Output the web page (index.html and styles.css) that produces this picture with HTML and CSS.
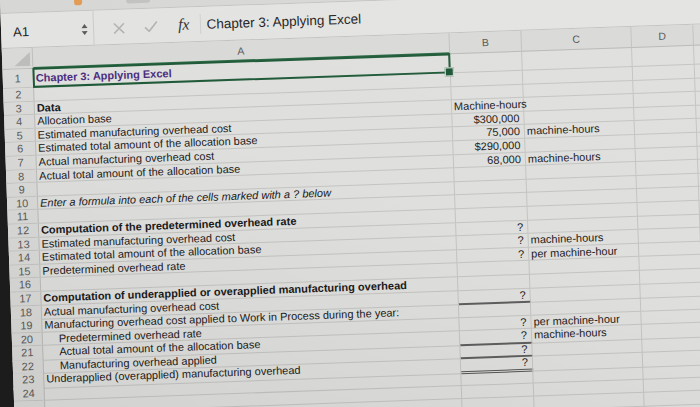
FILE: index.html
```html
<!DOCTYPE html>
<html lang="en">
<head>
<meta charset="utf-8">
<title>Chapter 3: Applying Excel</title>
<link rel="stylesheet" href="styles.css">
</head>
<body>
<div class="screen">
  <div class="toolbar">
    <span class="tb-icon"></span>
    <span class="tb-btn"></span>
  </div>
  <div class="fbar">
    <div class="namebox">
      <span>A1</span>
      <svg class="spin" width="7" height="13" viewBox="0 0 7 13"><path d="M3.5 1 L6.5 5 H0.5 Z M3.5 12 L0.5 8 H6.5 Z" fill="#5a5a5a"/></svg>
    </div>
    <svg class="ico-x" width="12" height="11" viewBox="0 0 12 11"><path d="M1 0.5 L11 10.5 M11 0.5 L1 10.5" stroke="#b3b3b1" stroke-width="1.6" fill="none"/></svg>
    <svg class="ico-ok" width="14" height="12" viewBox="0 0 14 12"><path d="M1 6.5 L5 10.5 L13 1" stroke="#b3b3b1" stroke-width="1.6" fill="none"/></svg>
    <span class="fx">fx</span>
    <span class="fsep"></span>
    <span class="ftext">Chapter 3: Applying Excel</span>
  </div>
  <div class="sheet">
    <div class="hrow">
      <div class="corner"><svg width="16" height="14" viewBox="0 0 16 14"><path d="M16 0 L16 14 L0 14 Z" fill="#bdbdbb"/></svg></div>
      <div class="ch csel">A</div>
      <div class="ch">B</div>
      <div class="ch">C</div>
      <div class="ch">D</div>
      <div class="ch"></div>
    </div>
    <div class="r r1"><div class="rh">1</div><div class="sel">Chapter 3: Applying Excel</div><div></div><div></div><div></div><div></div></div>
    <div class="r"><div class="rh">2</div><div></div><div></div><div></div><div></div><div></div></div>
    <div class="r"><div class="rh">3</div><div class="bold">Data</div><div></div><div></div><div></div><div></div></div>
    <div class="r"><div class="rh">4</div><div>Allocation base</div><div>Machine-hours</div><div></div><div></div><div></div></div>
    <div class="r"><div class="rh">5</div><div>Estimated manufacturing overhead cost</div><div class="num">$300,000</div><div></div><div></div><div></div></div>
    <div class="r"><div class="rh">6</div><div>Estimated total amount of the allocation base</div><div class="num">75,000</div><div>machine-hours</div><div></div><div></div></div>
    <div class="r"><div class="rh">7</div><div>Actual manufacturing overhead cost</div><div class="num">$290,000</div><div></div><div></div><div></div></div>
    <div class="r"><div class="rh">8</div><div>Actual total amount of the allocation base</div><div class="num">68,000</div><div>machine-hours</div><div></div><div></div></div>
    <div class="r"><div class="rh">9</div><div></div><div></div><div></div><div></div><div></div></div>
    <div class="r"><div class="rh">10</div><div class="it">Enter a formula into each of the cells marked with a ? below</div><div></div><div></div><div></div><div></div></div>
    <div class="r"><div class="rh">11</div><div></div><div></div><div></div><div></div><div></div></div>
    <div class="r"><div class="rh">12</div><div class="bold">Computation of the predetermined overhead rate</div><div></div><div></div><div></div><div></div></div>
    <div class="r"><div class="rh">13</div><div>Estimated manufacturing overhead cost</div><div class="num">?</div><div></div><div></div><div></div></div>
    <div class="r"><div class="rh">14</div><div>Estimated total amount of the allocation base</div><div class="num">?</div><div>machine-hours</div><div></div><div></div></div>
    <div class="r"><div class="rh">15</div><div>Predetermined overhead rate</div><div class="num">?</div><div>per machine-hour</div><div></div><div></div></div>
    <div class="r"><div class="rh">16</div><div></div><div></div><div></div><div></div><div></div></div>
    <div class="r"><div class="rh">17</div><div class="bold">Computation of underapplied or overapplied manufacturing overhead</div><div></div><div></div><div></div><div></div></div>
    <div class="r"><div class="rh">18</div><div>Actual manufacturing overhead cost</div><div class="num bb">?</div><div></div><div></div><div></div></div>
    <div class="r"><div class="rh">19</div><div>Manufacturing overhead cost applied to Work in Process during the year:</div><div></div><div></div><div></div><div></div></div>
    <div class="r"><div class="rh">20</div><div class="ind">Predetermined overhead rate</div><div class="num">?</div><div>per machine-hour</div><div></div><div></div></div>
    <div class="r"><div class="rh">21</div><div class="ind">Actual total amount of the allocation base</div><div class="num bb">?</div><div>machine-hours</div><div></div><div></div></div>
    <div class="r"><div class="rh">22</div><div class="ind">Manufacturing overhead applied</div><div class="num bb">?</div><div></div><div></div><div></div></div>
    <div class="r"><div class="rh">23</div><div>Underapplied (overapplied) manufacturing overhead</div><div class="num bd">?</div><div></div><div></div><div></div></div>
    <div class="r"><div class="rh">24</div><div></div><div></div><div></div><div></div><div></div></div>
    <div class="r"><div class="rh"></div><div></div><div></div><div></div><div></div><div></div></div>
    <div class="r"><div class="rh"></div><div></div><div></div><div></div><div></div><div></div></div>
    <div class="r"><div class="rh"></div><div></div><div></div><div></div><div></div><div></div></div>
  </div>
</div>
</body>
</html>
```
FILE: styles.css
```css
* { box-sizing: border-box; }
html, body { margin: 0; height: 100%; }
body {
  background: #1c1c1c;
  overflow: hidden;
  font-family: "Liberation Sans", Arial, sans-serif;
}
.screen {
  position: relative;
  width: 770px;
  height: 480px;
  background: #dfdfdd;
  transform: rotate(-2deg);
  transform-origin: 0 0;
  --cols: 31px 417px 72px 110px 62px 78px;
}
.screen::after {
  content: "";
  position: absolute;
  inset: 0;
  pointer-events: none;
  background: linear-gradient(20deg, rgba(0,0,0,0.07) 0%, rgba(0,0,0,0) 55%, rgba(255,255,255,0.05) 100%);
}
.toolbar {
  height: 14px;
  display: flex;
  align-items: flex-start;
  background: #d7d7d5;
  border-bottom: 1px solid #c4c4c2;
}
.tb-icon {
  width: 8px; height: 6px;
  margin: 2px 0 0 74px;
  background: #e39b52;
  border-radius: 0 0 3px 3px;
}
.tb-btn {
  width: 24px; height: 4px;
  margin: 4px 0 0 44px;
  background: #c2c2c0;
  border-radius: 0 0 3px 3px;
}
.fbar {
  height: 35px;
  display: flex;
  align-items: center;
  background: #e3e3e1;
  border-bottom: 1px solid #c2c2c0;
}
.namebox {
  width: 93px;
  height: 100%;
  display: flex;
  align-items: center;
  justify-content: space-between;
  padding: 2px 5px 0 12px;
  border-right: 1px solid #cbcbc9;
  font-size: 13px;
  color: #222;
}
.ico-x { margin: 2px 0 0 19px; }
.ico-ok { margin: 2px 0 0 19px; }
.fx {
  margin-left: 20px;
  font-family: "Liberation Serif", "Times New Roman", serif;
  font-style: italic;
  font-size: 16px;
  color: #333;
}
.fsep {
  width: 1px;
  height: 20px;
  margin-left: 10px;
  background: #cfcfcd;
}
.ftext {
  margin-left: 6px;
  font-size: 13.5px;
  color: #1e1e1e;
}
.hrow {
  display: grid;
  grid-template-columns: var(--cols);
  height: 21px;
  background: #d9d9d7;
}
.corner {
  display: flex;
  align-items: flex-end;
  justify-content: flex-end;
  padding: 0 2px 2px 0;
  border-right: 1px solid #bfbfbd;
  border-bottom: 1px solid #b9b9b7;
}
.ch {
  display: flex;
  align-items: center;
  justify-content: center;
  font-size: 10.5px;
  color: #555;
  border-right: 1px solid #c2c2c0;
  border-bottom: 1px solid #b9b9b7;
}
.ch.csel { border-bottom: 2px solid #2a6843; }
.r {
  display: grid;
  grid-template-columns: var(--cols);
  height: 13.6px;
}
.r > div {
  border-right: 1px solid #c4c4c2;
  border-bottom: 1px solid #c4c4c2;
  font-size: 11px;
  line-height: 12.6px;
  white-space: nowrap;
  padding: 0 2px;
  color: #1a1a1a;
}
.r > .rh {
  text-align: center;
  color: #5a5a5a;
  background: #dadad8;
  border-right-color: #bcbcba;
}
.r1 { height: 19px; }
.r1 > div { line-height: 18px; }
.r > .bold { font-weight: bold; }
.r > .it { font-style: italic; }
.r > .ind { padding-left: 16px; }
.r > .num { text-align: right; padding-right: 4px; }
.r > .bb { border-bottom: 2px solid #5e5e5e; }
.r > .bd { border-bottom: 3px double #555; }
.r > .sel {
  position: relative;
  color: #4a2d7f;
  font-weight: bold;
}
.sel::after {
  content: "";
  position: absolute;
  left: -1px; top: -1px; right: -1px; bottom: -1px;
  border: 2px solid #1f5a38;
}
.sel::before {
  content: "";
  position: absolute;
  right: -4px; bottom: -4px;
  width: 7px; height: 7px;
  background: #1f5a38;
  border: 1px solid #e6e6e4;
  z-index: 1;
}
```
